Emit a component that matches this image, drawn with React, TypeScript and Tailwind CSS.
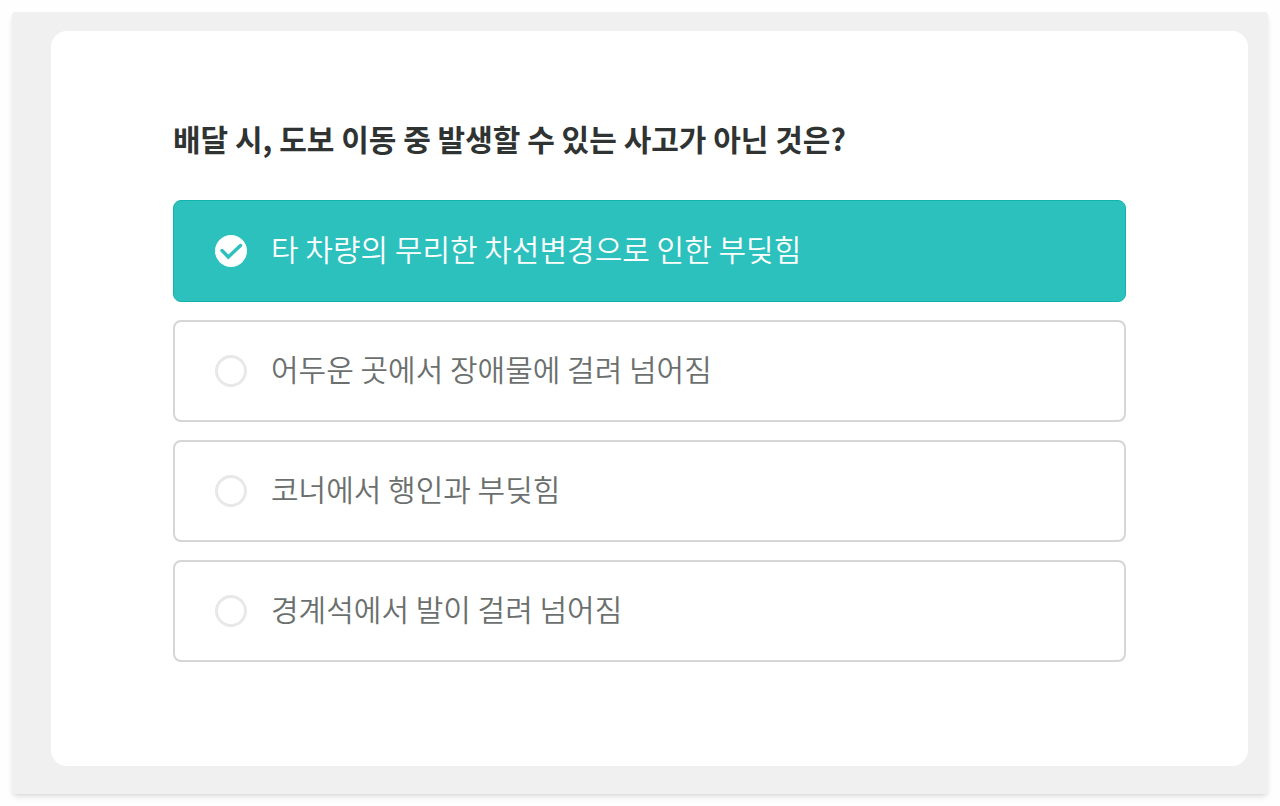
import React, { useState } from 'react';

const options = [
    '타 차량의 무리한 차선변경으로 인한 부딪힘',
    '어두운 곳에서 장애물에 걸려 넘어짐',
    '코너에서 행인과 부딪힘',
    '경계석에서 발이 걸려 넘어짐'
];

interface OptionProps {
    label: string;
    checked: boolean;
    onSelect: () => void;
}

const Option: React.FC<OptionProps> = ({ label, checked, onSelect }) => {
    return (
        <label
            className={
                checked
                    ? 'flex cursor-pointer items-center rounded-lg border border-[#12b3ae] bg-[#2cc1bd] py-[26px] pl-[41px] pr-6 text-white'
                    : 'flex cursor-pointer items-center rounded-lg border-2 border-[#d6d6d6] bg-white py-[25px] pl-10 pr-6 text-[#6b706e]'
            }
        >
            <span className="relative flex size-8 shrink-0">
                <input
                    type="radio"
                    name="answer"
                    checked={checked}
                    onChange={onSelect}
                    className="size-8 appearance-none rounded-full border-3 border-[#e8e8e8] bg-white checked:border-white"
                />
                {checked && (
                    <svg viewBox="0 0 32 32" className="pointer-events-none absolute inset-0 size-8" fill="none" stroke="#2cc1bd" strokeWidth="3.4" strokeLinecap="round">
                        <path d="M7 15.5 L13.3 22 L25.5 10.5" />
                    </svg>
                )}
            </span>
            <span className="ml-6 pb-1.5 text-[30px] leading-[42px] font-[350]">{label}</span>
        </label>
    );
};

export default function App() {
    const [selected, setSelected] = useState(0);

    return (
        <div className="min-h-screen bg-[#fefefe] p-3 font-['Noto_Sans_CJK_KR',sans-serif]">
            <main className="rounded-sm bg-[#f0f0f0] pt-[19px] pr-5 pb-7 pl-[39px] shadow-md">
                <form className="rounded-2xl bg-white px-[122px] pt-[83px] pb-[104px]">
                    <fieldset>
                        <legend className="text-[30px] leading-[48px] font-bold text-[#2f3432]">
                            배달 시, 도보 이동 중 발생할 수 있는 사고가 아닌 것은?
                        </legend>
                        <div className="mt-[38px] flex flex-col gap-[18px]">
                            {options.map((label, index) => (
                                <Option
                                    key={label}
                                    label={label}
                                    checked={selected === index}
                                    onSelect={() => setSelected(index)}
                                />
                            ))}
                        </div>
                    </fieldset>
                </form>
            </main>
        </div>
    );
}
